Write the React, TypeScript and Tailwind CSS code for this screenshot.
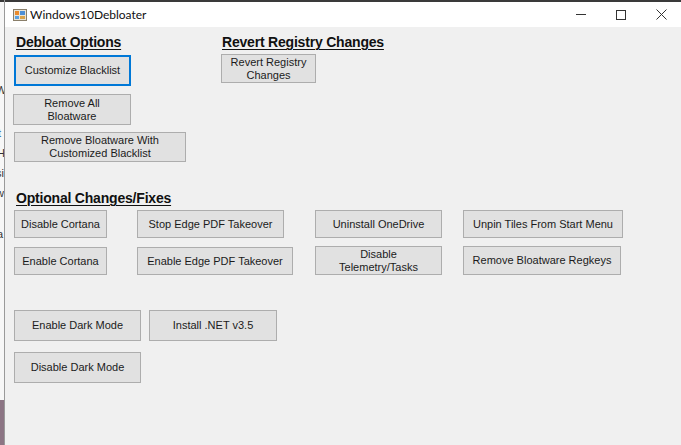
import React from "react";

type BtnProps = {
  label: React.ReactNode;
  w: string;
  h: string;
  focused?: boolean;
  className?: string;
};

function Btn({ label, w, h, focused, className = "" }: BtnProps) {
  return (
    <button
      type="button"
      className={`${w} ${h} ${className} flex items-center justify-center bg-[#e1e1e1] text-center text-[11px] leading-[13px] text-[#1b1b1b] ${
        focused ? "border-2 border-[#0078d7]" : "border border-[#adadad]"
      }`}
    >
      {label}
    </button>
  );
}

function Heading({ children }: { children: React.ReactNode }) {
  return (
    <h2 className="text-[14px] font-bold leading-[17px] tracking-[-0.2px] text-[#111] underline decoration-1 underline-offset-2">
      {children}
    </h2>
  );
}

function AppIcon() {
  return (
    <svg width="14" height="14" viewBox="0 0 14 14">
      <rect x="0.5" y="1.5" width="13" height="11" fill="#e8e4d8" stroke="#8a7f6a" />
      <rect x="2" y="3" width="4" height="4" fill="#e98a2c" />
      <rect x="7" y="3" width="5" height="4" fill="#4d8fd6" />
      <rect x="2" y="8" width="4" height="3" fill="#5aa0e0" />
      <rect x="7" y="8" width="5" height="3" fill="#d9a24a" />
    </svg>
  );
}

export default function App() {
  return (
    <div
      className="flex h-[445px] w-[681px] overflow-hidden bg-[#f0f0f0]"
      style={{ fontFamily: '"Liberation Sans", Arial, sans-serif' }}
    >
      {/* bit of the window behind */}
      <div className="flex w-[5px] shrink-0 flex-col border-r border-[#9a9a9a] bg-[#f7f7f7]">
        <div className="h-[2px] bg-[#3a3a3a]" />
        <div className="flex flex-1 flex-col overflow-hidden pt-[78px] text-[11px] leading-[20px] text-[#333]">
          <span className="-ml-[4px]">W</span>
          <span className="mt-[23px] -ml-[2px] text-[#1f5fa8]">t</span>
          <span className="-ml-[3px]">H</span>
          <span className="-ml-[4px]">si</span>
          <span className="-ml-[4px]">w</span>
          <span className="mt-[21px] -ml-[3px]">a</span>
        </div>
        <div className="h-[45px] bg-[#8c7584]" />
      </div>

      <div className="flex flex-1 flex-col">
        {/* title bar */}
        <div className="flex h-[27px] items-center border-t-2 border-[#3a3a3a] bg-white">
          <div className="ml-[8px] flex items-center gap-[3px]">
            <AppIcon />
            <span className="text-[12px] text-[#111]" style={{ fontFamily: "Lato, sans-serif" }}>
              Windows10Debloater
            </span>
          </div>
          <div className="ml-auto flex h-full">
            <div className="flex w-[40px] items-center justify-center">
              <div className="h-px w-[10px] bg-[#333]" />
            </div>
            <div className="flex w-[40px] items-center justify-center">
              <div className="h-[10px] w-[10px] border border-[#333]" />
            </div>
            <div className="flex w-[40px] items-center justify-center">
              <svg width="11" height="11" viewBox="0 0 11 11">
                <path d="M0.5 0.5 L10.5 10.5 M10.5 0.5 L0.5 10.5" stroke="#333" strokeWidth="1" />
              </svg>
            </div>
          </div>
        </div>

        {/* form body */}
        <div className="flex flex-1 flex-col pl-[9px] pt-[7px]">
          <div className="flex">
            <div className="flex w-[207px] flex-col items-start">
              <div className="ml-[2px]">
                <Heading>Debloat Options</Heading>
              </div>
              <Btn label="Customize Blacklist" w="w-[117px]" h="h-[31px]" focused className="mt-[4px]" />
              <Btn
                label={<>Remove All<br />Bloatware</>}
                w="w-[118px]"
                h="h-[31px]"
                className="mt-[8px] -ml-px"
              />
              <Btn
                label={<>Remove Bloatware With<br />Customized Blacklist</>}
                w="w-[172px]"
                h="h-[30px]"
                className="mt-[7px]"
              />
            </div>
            <div className="flex flex-col items-start">
              <div className="ml-[1px]">
                <Heading>Revert Registry Changes</Heading>
              </div>
              <Btn
                label={<>Revert Registry<br />Changes</>}
                w="w-[95px]"
                h="h-[29px]"
                className="mt-[3px]"
              />
            </div>
          </div>

          <div className="ml-[2px] mt-[28px]">
            <Heading>Optional Changes/Fixes</Heading>
          </div>

          <div className="mt-[3px] flex items-start">
            <div className="flex flex-col gap-[9px]">
              <Btn label="Disable Cortana" w="w-[93px]" h="h-[28px]" />
              <Btn label="Enable Cortana" w="w-[93px]" h="h-[28px]" />
            </div>
            <div className="ml-[30px] flex flex-col items-start gap-[9px]">
              <Btn label="Stop Edge PDF Takeover" w="w-[147px]" h="h-[28px]" />
              <Btn label="Enable Edge PDF Takeover" w="w-[156px]" h="h-[28px]" />
            </div>
            <div className="ml-[22px] flex flex-col gap-[8px]">
              <Btn label="Uninstall OneDrive" w="w-[127px]" h="h-[28px]" />
              <Btn
                label={<>Disable<br />Telemetry/Tasks</>}
                w="w-[127px]"
                h="h-[29px]"
              />
            </div>
            <div className="ml-[21px] flex flex-col items-start gap-[8px]">
              <Btn label="Unpin Tiles From Start Menu" w="w-[160px]" h="h-[28px]" />
              <Btn label="Remove Bloatware Regkeys" w="w-[158px]" h="h-[29px]" />
            </div>
          </div>

          <div className="mt-[35px] flex gap-[8px]">
            <Btn label="Enable Dark Mode" w="w-[127px]" h="h-[31px]" />
            <Btn label="Install .NET v3.5" w="w-[128px]" h="h-[31px]" />
          </div>
          <Btn label="Disable Dark Mode" w="w-[127px]" h="h-[31px]" className="mt-[11px]" />
        </div>
      </div>
    </div>
  );
}
